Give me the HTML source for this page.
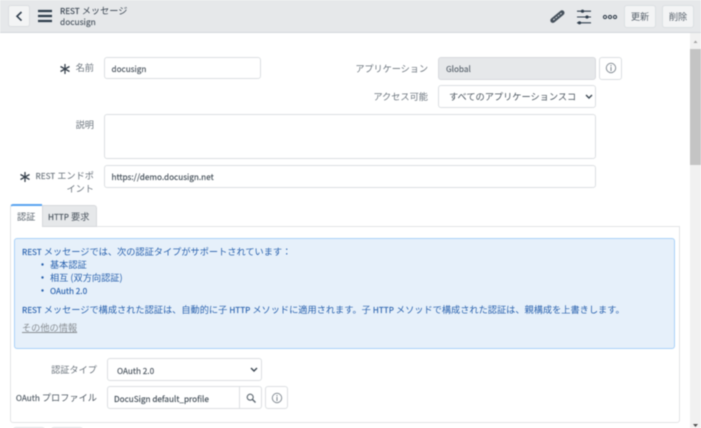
<!DOCTYPE html>
<html lang="ja"><head><meta charset="utf-8"><style>
html,body{margin:0;padding:0;width:701px;height:428px;overflow:hidden;background:#fff}
body{position:relative;font-family:"Noto Sans CJK JP","Liberation Sans",sans-serif;font-size:9.2px;color:#3b4652}
#w{position:absolute;left:0;top:0;width:701px;height:428px;filter:blur(.4px)}
.a{position:absolute;white-space:nowrap;line-height:13px}
.b{position:absolute;box-sizing:border-box;border:1px solid #dcdfe2;border-radius:3px;background:#fff}
.l{position:absolute;white-space:nowrap;line-height:13px;color:#6c757e;text-align:right}
.t{position:absolute;white-space:nowrap;line-height:13px;color:#3f4a55}
.n{color:#2a62ae}
.e{font-size:8.2px;-webkit-text-stroke:.15px}
svg{position:absolute;overflow:visible}
</style></head><body><div id="w">
<div class="a" style="left:0;top:0;width:701px;height:33px;background:#e6e8ea;border-bottom:1px solid #d3d7db;box-sizing:border-box"></div>
<div class="b" style="left:8px;top:5px;width:22px;height:22px;background:#f3f4f5;border-color:#dcdee1"></div>
<svg style="left:0;top:0" width="60" height="33"><path d="M21.5 12 L17 16.3 L21.5 20.6" fill="none" stroke="#2f3d4c" stroke-width="1.6"/><path d="M38 11h14M38 16h14M38 21h14" stroke="#2f3d4c" stroke-width="2.2"/></svg>
<div class="t" style="left:60px;top:4px;color:#3a4552"><span class="e">REST</span> メッセージ</div>
<div class="t" style="left:60px;top:14.5px;color:#4b5661"><span class="e" style="font-size:8.4px">docusign</span></div>
<svg style="left:550px;top:10px" width="15" height="13"><path d="M2.8 10.4 L12 2.8" stroke="#46515c" stroke-width="5" stroke-linecap="round"/><path d="M3.2 10 L11.6 3.1" stroke="#c4c8cc" stroke-width="1.2" stroke-dasharray="2 1"/></svg>
<svg style="left:577px;top:10px" width="14" height="14"><path d="M0 1.2h14M0 7h14M0 12.8h14" stroke="#2f3d4c" stroke-width="1.1"/><circle cx="5.5" cy="1.2" r="1.6" fill="#2f3d4c"/><circle cx="10" cy="7" r="1.6" fill="#2f3d4c"/><circle cx="2.5" cy="12.8" r="1.6" fill="#2f3d4c"/></svg>
<svg style="left:603px;top:14px" width="14" height="6"><g fill="none" stroke="#36424f" stroke-width="1.1"><circle cx="2" cy="3" r="1.6"/><circle cx="7" cy="3" r="1.6"/><circle cx="12" cy="3" r="1.6"/></g></svg>
<div class="b" style="left:624px;top:5px;width:32px;height:23px;background:#f3f4f5"></div>
<div class="t" style="left:624px;top:9.5px;width:32px;text-align:center;color:#59636d">更新</div>
<div class="b" style="left:662px;top:5px;width:32px;height:23px;background:#f3f4f5"></div>
<div class="t" style="left:662px;top:9.5px;width:32px;text-align:center;color:#59636d">削除</div>

<div class="a" style="left:690px;top:33px;width:11px;height:395px;background:#f1f1f1"></div>
<div class="a" style="left:690px;top:49px;width:11px;height:116px;background:#c4c4c4"></div>
<svg style="left:690px;top:33px" width="11" height="395"><path d="M3.5 10 L5.5 7.5 L7.5 10Z" fill="#a3a3a3"/><path d="M3 391 L5.5 394 L8 391Z" fill="#505050"/></svg>

<svg style="left:60px;top:63.5px" width="10" height="10"><path d="M5 0v10M0.5 2.5l9 5M9.5 2.5l-9 5" stroke="#39434e" stroke-width="1.3"/></svg>
<div class="l" style="left:40px;top:61px;width:54px">名前</div>
<div class="b" style="left:104px;top:57px;width:157px;height:22px"></div>
<div class="t" style="left:111.5px;top:61.5px;color:#4a545e"><span class="e">docusign</span></div>

<div class="l" style="left:340px;top:61.5px;width:88px;letter-spacing:-.08px">アプリケーション</div>
<div class="b" style="left:438px;top:57px;width:158px;height:23px;background:#e6e8ea;border-color:#d8dade"></div>
<div class="t" style="left:446px;top:62px;color:#59636d"><span class="e">Global</span></div>
<div class="b" style="left:599px;top:57px;width:23px;height:23px"></div>
<svg style="left:605px;top:62px" width="12" height="12"><circle cx="6" cy="6" r="4.7" fill="none" stroke="#858d95"/><path d="M6 5v4M6 3v1.3" stroke="#858d95" stroke-width="1.1"/></svg>

<div class="l" style="left:340px;top:89.5px;width:88px">アクセス可能</div>
<div class="b" style="left:438px;top:85px;width:158px;height:23px"></div>
<div class="t" style="left:449px;top:90px;color:#4a545e">すべてのアプリケーションスコ</div>
<svg style="left:585px;top:94px" width="9" height="6"><path d="M1 1 L4 4 L7 1" fill="none" stroke="#3c4752" stroke-width="1.4"/></svg>

<div class="l" style="left:40px;top:117.5px;width:54px">説明</div>
<div class="b" style="left:104px;top:114px;width:492px;height:45px"></div>

<svg style="left:20px;top:172px" width="10" height="10"><path d="M5 0v10M0.5 2.5l9 5M9.5 2.5l-9 5" stroke="#39434e" stroke-width="1.3"/></svg>
<div class="l" style="left:30px;top:169px;width:64px"><span class="e">REST</span> エンドポ</div>
<div class="l" style="left:30px;top:182px;width:64px">イント</div>
<div class="b" style="left:104px;top:165px;width:492px;height:23px"></div>
<div class="t" style="left:111.5px;top:169.5px;color:#414c56"><span class="e">https://demo.docusign.net</span></div>

<div class="b" style="left:10px;top:226px;width:670px;height:197px;border-color:#e3e4e6;border-radius:0 0 3px 3px"></div>
<div class="a" style="left:42px;top:205px;width:55px;height:22px;background:#e6e8ea;border:1px solid #d7d9dc;box-sizing:border-box;border-radius:0 3px 0 0"></div>
<div class="a" style="left:10px;top:204px;width:32px;height:23px;background:#fff;border-top:2px solid #5aa4f0;border-left:1px solid #e3e4e6;box-sizing:border-box;border-radius:3px 0 0 0"></div>
<div class="t" style="left:17px;top:210px;color:#59636d">認証</div>
<div class="t" style="left:48px;top:210px;color:#4a545e"><span class="e">HTTP</span> 要求</div>

<div class="b" style="left:14px;top:238px;width:661px;height:110.5px;background:#e6f0fa;border-color:#a9d1f7"></div>
<div class="t n" style="left:22px;top:245px"><span class="e">REST</span> メッセージでは、次の認証タイプがサポートされています：</div>
<div class="t n" style="left:50px;top:258px">基本認証</div>
<div class="t n" style="left:50px;top:271px">相互 (双方向認証)</div>
<div class="t n" style="left:50px;top:284px"><span class="e">OAuth 2.0</span></div>
<svg style="left:40px;top:262px" width="6" height="32"><g fill="#2a62ae"><circle cx="2.5" cy="2.5" r="1.2"/><circle cx="2.5" cy="15.5" r="1.2"/><circle cx="2.5" cy="28.5" r="1.2"/></g></svg>
<div class="t n" style="left:22px;top:302.5px"><span class="e">REST</span> メッセージで構成された認証は、自動的に子 <span class="e">HTTP</span> メソッドに適用されます。子 <span class="e">HTTP</span> メソッドで構成された認証は、親構成を上書きします。</div>
<div class="t" style="left:22px;top:321px;color:#8a8f94;text-decoration:underline">その他の情報</div>

<div class="l" style="left:20px;top:363px;width:77px">認証タイプ</div>
<div class="b" style="left:107px;top:358px;width:155px;height:23px"></div>
<div class="t" style="left:117px;top:364px;color:#4a545e"><span class="e">OAuth 2.0</span></div>
<svg style="left:250px;top:367px" width="9" height="6"><path d="M1 1 L4 4 L7 1" fill="none" stroke="#3c4752" stroke-width="1.4"/></svg>

<div class="l" style="left:7px;top:391px;width:90px;color:#4f5963"><span class="e">OAuth</span> プロファイル</div>
<div class="b" style="left:107px;top:386px;width:155px;height:23px"></div>
<div class="a" style="left:239px;top:386px;width:1px;height:23px;background:#dcdfe2"></div>
<div class="t" style="left:114px;top:391.5px;color:#414c56"><span class="e">DocuSign default_profile</span></div>
<svg style="left:246px;top:393px" width="11" height="11"><circle cx="4.2" cy="4.2" r="3" fill="none" stroke="#5d6770" stroke-width="1.1"/><path d="M6.5 6.5 L9.5 9.5" stroke="#5d6770" stroke-width="1.4"/></svg>
<div class="b" style="left:265px;top:386px;width:23px;height:23px"></div>
<svg style="left:271px;top:392px" width="12" height="12"><circle cx="6" cy="6" r="4.7" fill="none" stroke="#858d95"/><path d="M6 5v4M6 3v1.3" stroke="#858d95" stroke-width="1.1"/></svg>

<div class="b" style="left:13px;top:426.5px;width:32px;height:10px"></div>
<div class="b" style="left:51px;top:426.5px;width:32px;height:10px"></div>
</div></body></html>
